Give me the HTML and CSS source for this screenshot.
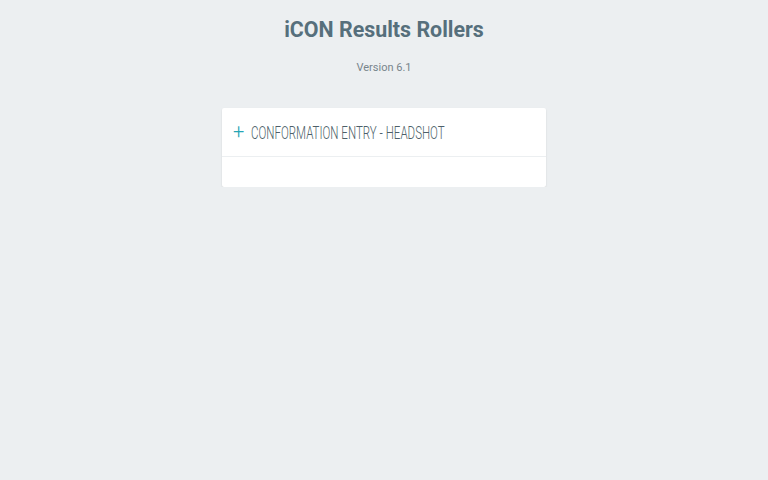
FILE: index.html
```html
<!DOCTYPE html>
<html lang="en">

<head>
  <meta charset="UTF-8">
  <meta name="viewport" content="width=device-width, initial-scale=1.0">
  <title>iCON Results Rollers</title>
  <link rel="stylesheet" href="styles.css">
</head>

<body>
  <header>
    <h1>iCON Results Rollers</h1>
    <p class="version">Version 6.1</p>
  </header>

  <main>
    <section class="panel">
      <div class="panel-head">
        <span class="plus">+</span>
        <span class="panel-title">CONFORMATION ENTRY - HEADSHOT</span>
      </div>
      <div class="panel-body"></div>
    </section>
  </main>
</body>

</html>
```

FILE: styles.css
```css
body {
  font-family: Roboto, "Liberation Sans", sans-serif;
  background: #eceff1;
  color: #546e7a;
  margin: 0;
}

header {
  display: flex;
  flex-direction: column;
  align-items: center;
  padding-top: 17px;
}

h1 {
  font-size: 21.4px;
  font-weight: 700;
  margin: 0;
  color: #566f7c;
}

.version {
  font-size: 11px;
  color: #78858c;
  margin: 19px 0 0;
}

main {
  display: flex;
  justify-content: center;
  padding-top: 34px;
}

.panel {
  inline-size: 324px;
  background: #fff;
  border-radius: 2px;
  box-shadow: 0 1px 2px rgba(0, 0, 0, 0.12);
}

.panel-head {
  display: flex;
  align-items: center;
  gap: 7px;
  block-size: 49px;
  padding-inline: 11px;
  border-bottom: 1px solid #eceff1;
  box-sizing: border-box;
}

.plus {
  color: #26a5b5;
  font-size: 20px;
  font-weight: 300;
  line-height: 1;
  margin-top: -2px;
}

.panel-title {
  font-size: 18px;
  font-weight: 300;
  color: #4d5f69;
  white-space: nowrap;
  display: inline-block;
  transform: scaleX(0.64);
  transform-origin: left center;
}

.panel-body {
  block-size: 30px;
}
```
